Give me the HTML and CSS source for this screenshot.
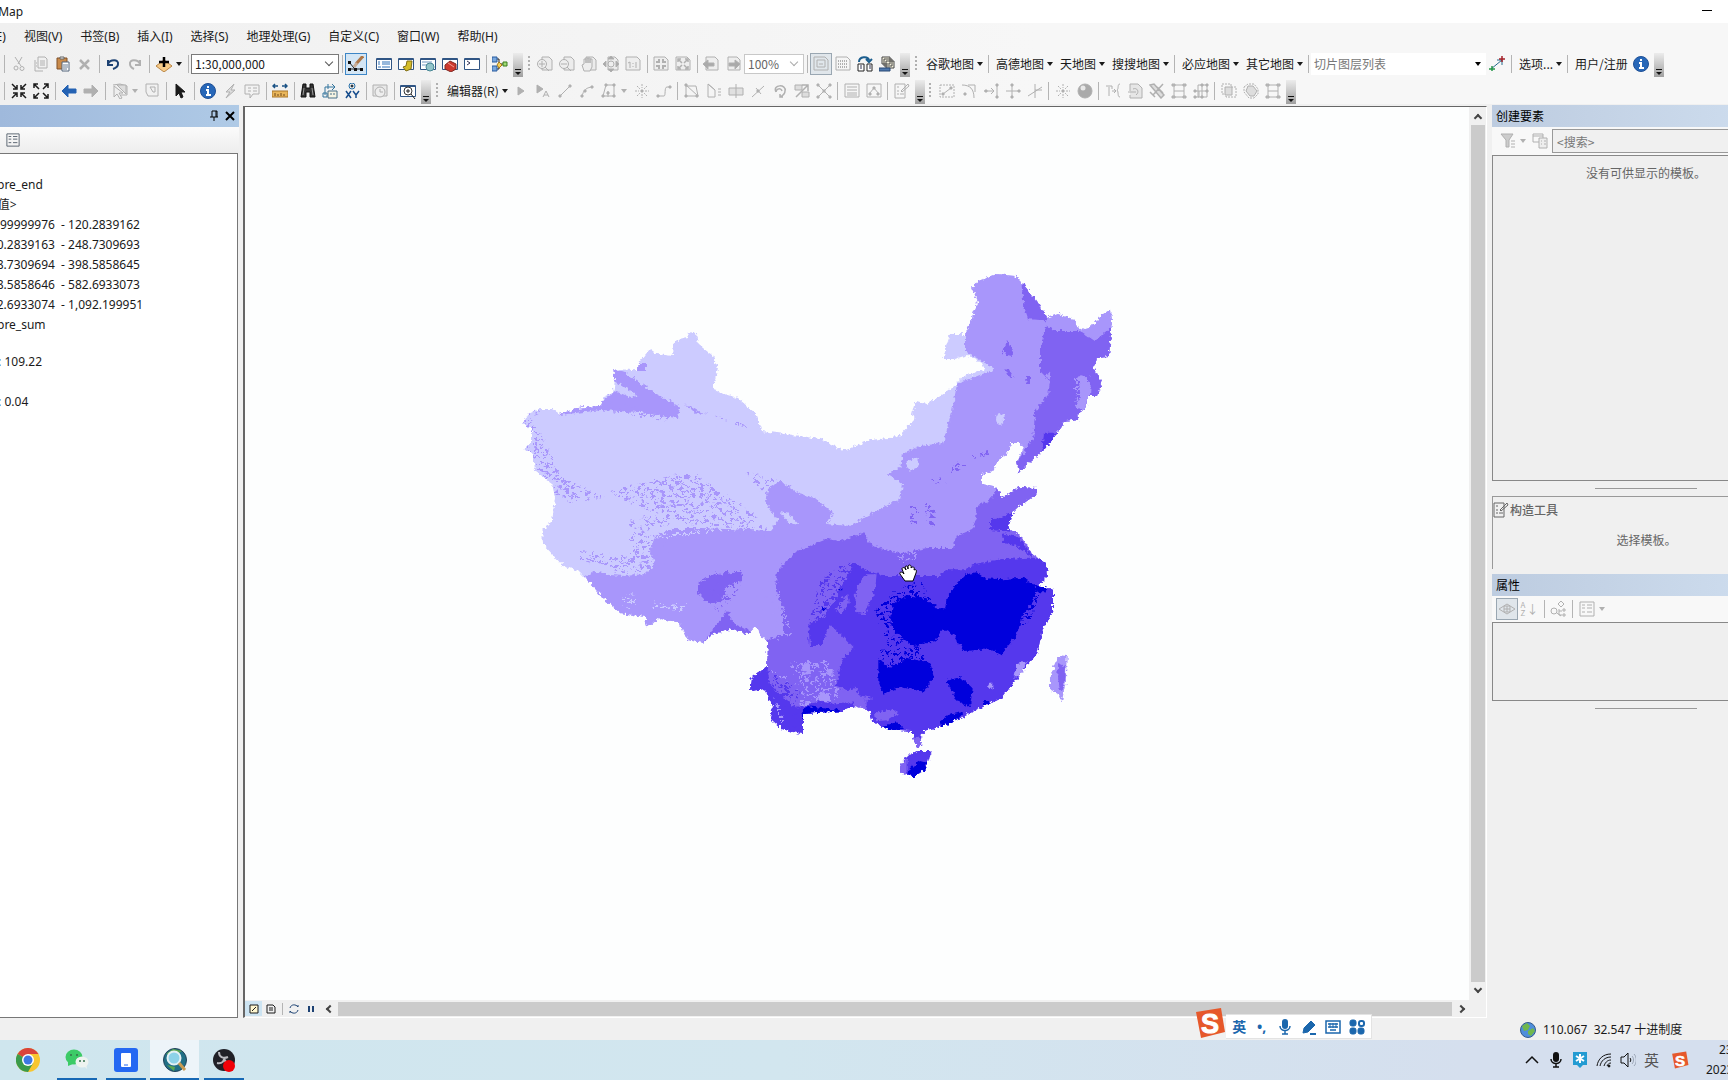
FILE: index.html
```html
<!DOCTYPE html>
<html lang="zh-CN">
<head>
<meta charset="utf-8">
<title>ArcMap</title>
<link rel="stylesheet" href="styles.css">
</head>
<body>
<svg class="defs" aria-hidden="true">
  <symbol id="cut" viewBox="0 0 16 16"><path d="M4 1l6 9M11 1L7 8"/><circle cx="5" cy="12" r="2"/><circle cx="11" cy="12.500" r="2"/></symbol>
  <symbol id="copy" viewBox="0 0 16 16"><path d="M5 1h7l2 2v9H5zM2 4v11h8M7 5h5M7 7h5M7 9h5M3 7h1M3 10h1"/></symbol>
  <symbol id="paste" viewBox="0 0 16 16"><path d="M2 2h10v11H2z" fill="#c98a4a" stroke="#805028"/><path d="M5 1h4v2H5z" fill="#eee" stroke="#666"/><path d="M7 6h7v9H7z" fill="#fff" stroke="#53657a"/><path d="M8 9h5M8 11h5M8 13h4" stroke="#6b7c92"/></symbol>
  <symbol id="del" viewBox="0 0 16 16"><path d="M3 4l9 9M12 4l-9 9" stroke-width="2.500"/></symbol>
  <symbol id="undo" viewBox="0 0 16 16"><path d="M3 4v5h5M3 8c2-5 11-5 10 0 0 3-2 4-5 5" stroke-width="2"/></symbol>
  <symbol id="redo" viewBox="0 0 16 16"><path d="M13 4v5H8M13 8C11 3 2 3 3 8c0 3 2 4 4 5" stroke-width="2"/></symbol>
  <symbol id="add" viewBox="0 0 16 16"><path d="M0 10l8-6 8 6-8 6z" fill="#f6cb88" stroke="#b98545"/><path d="M8 1v10M3 6h10" stroke="#000" stroke-width="2.500"/></symbol>
  <symbol id="edit" viewBox="0 0 16 16"><path d="M2 13h12M1 6l5 6" stroke="#222"/><path d="M0 12h3v3H0zM6 12h3v3H6zM12 12h3v3h-3zM0 5h3v3H0z" fill="#111" stroke="none"/><path d="M15 0L8 8" stroke="#ae7646" stroke-width="3"/><path d="M9 7l-3 4" stroke="#c9ae98" stroke-width="3"/></symbol>
  <symbol id="win" viewBox="0 0 16 16"><path d="M.5 2.500h15v11H.5z" fill="#fff" stroke="#305584"/><path d="M1 3h14" stroke="#305584" stroke-width="2"/></symbol>
  <symbol id="wtable" viewBox="0 0 16 16"><use href="#win"/><path d="M2 6h2M2 8h2M2 11h3M6 6h8M6 8h8M6 11h8" stroke="#3273b7"/></symbol>
  <symbol id="wcat" viewBox="0 0 16 16"><use href="#win"/><path d="M9 5h5l-1 8-5 2-3-4 3-1z" fill="#d4bd29" stroke="#806e16"/></symbol>
  <symbol id="wsearch" viewBox="0 0 16 16"><use href="#win"/><path d="M2 6h10M2 9h5" stroke="#7399c2"/><circle cx="10" cy="11" r="4" fill="#93c4ca" stroke="#498795"/></symbol>
  <symbol id="wtool" viewBox="0 0 16 16"><use href="#win"/><path d="M3 9l5-4 6 3v5l-5 3-6-3z" fill="#ce3a2f" stroke="#802923"/><path d="M6 7l6 4" stroke="#f3a095"/></symbol>
  <symbol id="wpy" viewBox="0 0 16 16"><use href="#win"/><path d="M3 5l3 2-3 2" stroke="#335"/></symbol>
  <symbol id="model" viewBox="0 0 16 16"><path d="M3 3h4v10H3M7 8h5" stroke="#222"/><path d="M0 1h5v5H0zM0 10h5v5H0z" fill="#79a8df" stroke="#295b9d"/><path d="M7 6l3 3-3 3-2-3z" fill="#f7d15b" stroke="#a77c17"/><path d="M11 6h4v4h-4z" fill="#a0dc75" stroke="#3c7c20"/></symbol>
  <symbol id="page" viewBox="0 0 16 16"><path d="M5 1h7l3 3v10H5z" fill="#ececec"/></symbol>
  <symbol id="pin1" viewBox="0 0 16 16"><use href="#page"/><circle cx="5" cy="8" r="4.500" fill="#eee"/><path d="M5 5v6M2 8h6M8 11l4 4"/></symbol>
  <symbol id="pout" viewBox="0 0 16 16"><use href="#page"/><circle cx="5" cy="8" r="4.500" fill="#eee"/><path d="M2 8h6M8 11l4 4"/></symbol>
  <symbol id="phand" viewBox="0 0 16 16"><use href="#page"/><path d="M3 15L1 9l2-1V3h2v4-5h2v5-5h2v5-4h2v8l-2 4z" fill="#eee"/></symbol>
  <symbol id="pglobe" viewBox="0 0 16 16"><use href="#page"/><path d="M8 0l3 3H5zM8 16l3-3H5zM0 8l3-3v6zM16 8l-3-3v6z" fill="#aaa"/><circle cx="8" cy="8" r="3" fill="#eee"/></symbol>
  <symbol id="pone" viewBox="0 0 16 16"><path d="M1 1h11l3 3v10H1z" fill="#eee"/><path d="M3 7l2-1v6M11 6v6M8 7v1M8 10v1"/></symbol>
  <symbol id="pfour" viewBox="0 0 16 16"><path d="M1 1h11l3 3v10H1z" fill="#eee"/><path d="M6 3v3H3M10 3v3h3M6 13v-3H3M10 13v-3h3" stroke-width="2"/></symbol>
  <symbol id="pfull" viewBox="0 0 16 16"><path d="M1 1h11l3 3v10H1z" fill="#eee"/><path d="M3 6V3h3M10 3h3v3M3 10v3h3M13 10v3h-3M4 4l3 3M12 4L9 7M4 12l3-3M12 12L9 9" stroke-width="1.500"/></symbol>
  <symbol id="pback" viewBox="0 0 16 16"><path d="M3 1h9l3 3v10H3z" fill="#eee"/><path d="M0 8l5-4v3h6v3H5v3z" fill="#aaa"/></symbol>
  <symbol id="pfwd" viewBox="0 0 16 16"><path d="M3 1h9l3 3v10H3z" fill="#eee"/><path d="M15 8l-5-4v3H4v3h6v3z" fill="#aaa"/></symbol>
  <symbol id="draft" viewBox="0 0 16 16"><path d="M1 1h11l3 3v10H1z"/><path d="M4 4h8v7H4zM6 8h4"/></symbol>
  <symbol id="dots" viewBox="0 0 16 16"><path d="M1 1h11l3 3v10H1z"/><path d="M3 5h10M3 8h10M3 11h10" stroke-dasharray="1 1" stroke-width="2"/></symbol>
  <symbol id="swap" viewBox="0 0 16 16"><path d="M2 6C2 0 11 0 12 4M9 3l3 3 3-3" stroke="#1c5e8f" stroke-width="2"/><path d="M1 8h6v7H1zM10 8h5v7h-5z" fill="#fff" stroke="#222"/><path d="M3 10h2M3 12h2M12 10h2M12 12h2" stroke="#335"/></symbol>
  <symbol id="stack" viewBox="0 0 16 16"><path d="M3 1h8v7H3zM5 3h8v7H5zM7 5h8v7H7z" fill="#f6f3df" stroke="#444"/><path d="M0 12h11v3H0z" fill="#4e78ae" stroke="#284875"/></symbol>
  <symbol id="inward" viewBox="0 0 16 16"><path d="M1 1l4 4M15 1l-4 4M1 15l4-4M15 15l-4-4M2 6h4V2M10 2v4h4M2 10h4v4M10 14v-4h4" stroke-width="1.500"/></symbol>
  <symbol id="outward" viewBox="0 0 16 16"><path d="M1 1l5 5M15 1l-5 5M1 15l5-5M15 15l-5-5M1 5V1h4M11 1h4v4M1 11v4h4M11 15h4v-4" stroke-width="1.500"/></symbol>
  <symbol id="back" viewBox="0 0 16 16"><path d="M1 8l6-6v4h8v4H7v4z" fill="currentColor"/></symbol>
  <symbol id="fwd" viewBox="0 0 16 16"><path d="M15 8L9 2v4H1v4h8v4z" fill="currentColor"/></symbol>
  <symbol id="sel" viewBox="0 0 16 16"><path d="M1 2l7-1 7 2v9H9"/><path d="M5 2h9v9z" fill="#ddd"/><path d="M2 3v11l3-3 3 5 2-1-3-5h4z" fill="#eee"/></symbol>
  <symbol id="clearsel" viewBox="0 0 16 16"><path d="M2 1h12v12H4l-2-4zM6 4h5v5M6 4l3 5h2"/></symbol>
  <symbol id="arrow" viewBox="0 0 16 16"><path d="M4 1v12l3-3 2 5 2-1-2-5h4z" fill="currentColor"/></symbol>
  <symbol id="info" viewBox="0 0 16 16"><circle cx="8" cy="8" r="7.500" fill="#2767b8" stroke="#1e4f96"/><path d="M8 3v2M6 7h2v5M6 12h5" stroke="#fff" stroke-width="2"/></symbol>
  <symbol id="bolt" viewBox="0 0 16 16"><path d="M12 1L4 9h4l-4 6 9-8H9z" fill="#ddd"/></symbol>
  <symbol id="popup" viewBox="0 0 16 16"><path d="M1 2h14v9H9l-3 4v-4H1zM4 5h3M4 8h3M9 5h4M9 8h4"/></symbol>
  <symbol id="measure" viewBox="0 0 16 16"><path d="M1 3h5M10 3h5M3 1L1 3l2 2M13 1l2 2-2 2" stroke="#1a5285" stroke-width="1.500"/><path d="M0 8h16v6H0z" fill="#e9b65b" stroke="#a87529"/><path d="M3 10v3M6 11v2M9 10v3M12 11v2" stroke="#71491b"/></symbol>
  <symbol id="find" viewBox="0 0 16 16"><path d="M3 1h3v4h4V1h3l2 13h-5V9H6v5H1z" fill="#333" stroke="#111"/><path d="M4 5L3 12M12 5l1 7" stroke="#999"/></symbol>
  <symbol id="route" viewBox="0 0 16 16"><path d="M3 12V4h9M10 1l3 3-3 3M6 6V1M1 10h4v4H1z" stroke="#32749d"/><path d="M6 8h9v7H6zM8 11h2M11 11h2" fill="#f6f3e2" stroke="#476f88"/></symbol>
  <symbol id="xy" viewBox="0 0 16 16"><circle cx="8" cy="3" r="3" stroke="#2770a8"/><circle cx="8" cy="3" r="1" fill="#2770a8"/><path d="M2 8l5 7M7 8l-5 7M9 8l3 4 3-4M12 12v3" stroke="#174d8d" stroke-width="1.500"/></symbol>
  <symbol id="clock" viewBox="0 0 16 16"><path d="M1 2h14v11H1z" fill="#e8e8e8"/><circle cx="8" cy="9" r="5" fill="#eee"/><path d="M8 6v3h3"/></symbol>
  <symbol id="magwin" viewBox="0 0 16 16"><use href="#win"/><circle cx="8" cy="8" r="4" fill="#fff" stroke="#333"/><path d="M8 6v4M6 8h4M11 11l4 5" stroke="#222"/></symbol>
  <symbol id="play" viewBox="0 0 16 16"><path d="M5 4v8l6-4z" fill="currentColor"/></symbol>
  <symbol id="playa" viewBox="0 0 16 16"><path d="M2 2v8l6-4z" fill="currentColor"/><path d="M8 14l3-6 3 6M9 12h4"/></symbol>
  <symbol id="line" viewBox="0 0 16 16"><path d="M3 13L13 3"/><path d="M2 12h2v2H2zM12 2h2v2h-2z" fill="currentColor"/></symbol>
  <symbol id="arc" viewBox="0 0 16 16"><path d="M3 14C4 7 8 4 14 4"/><path d="M2 12h2v2H2zM5 7h2v2H5zM12 3h2v2h-2z" fill="currentColor"/></symbol>
  <symbol id="poly" viewBox="0 0 16 16"><path d="M5 2h8v11H2zM7 8v6"/><path d="M4 1h2v2H4zM12 1h2v2h-2zM12 12h2v2h-2zM1 12h2v2H1zM6 9h2v2H6z" fill="currentColor"/></symbol>
  <symbol id="burst" viewBox="0 0 16 16"><path d="M8 1v4M8 11v4M1 8h4M11 8h4M3 3l3 3M13 3l-3 3M3 13l3-3M13 13l-3-3" stroke-dasharray="2 1"/><path d="M7 7h2v2H7z" fill="currentColor"/></symbol>
  <symbol id="step" viewBox="0 0 16 16"><path d="M2 13h6c2 0 0-9 3-9h3"/><path d="M1 12h2v2H1zM13 3h2v2h-2z" fill="currentColor"/></symbol>
  <symbol id="tri" viewBox="0 0 16 16"><path d="M2 2v11h12zM2 3h10l2 10"/><path d="M1 1h2v2H1zM12 12h2v2h-2zM1 12h2v2H1z" fill="currentColor"/></symbol>
  <symbol id="tri2" viewBox="0 0 16 16"><path d="M2 1v13h7V7zM2 1l7 6M12 6h3M12 9h3M12 12h3"/></symbol>
  <symbol id="cutp" viewBox="0 0 16 16"><path d="M1 5h14v7H1zM8 1v14" fill="#e0e0e0"/></symbol>
  <symbol id="split" viewBox="0 0 16 16"><path d="M2 14L14 3M6 5l5 6"/><path d="M7 7h2v2H7z" fill="currentColor"/></symbol>
  <symbol id="rot" viewBox="0 0 16 16"><path d="M4 9c-4-8 11-8 9-1 0 3-3 5-5 6M4 9c0-3 5-5 6-1M8 11v3h3" stroke-width="1.500"/></symbol>
  <symbol id="attr" viewBox="0 0 16 16"><path d="M1 2h7v5H1zM8 9h7v5H8z" fill="#ddd"/><path d="M2 14L14 2M8 2h6v6" stroke-width="1.500"/></symbol>
  <symbol id="nodes" viewBox="0 0 16 16"><path d="M2 2l12 12M14 2L2 14"/><path d="M1 1h2v2H1zM13 1h2v2h-2zM1 13h2v2H1zM13 13h2v2h-2zM7 7h2v2H7z" fill="currentColor"/></symbol>
  <symbol id="list" viewBox="0 0 16 16"><path d="M1 1h14v13H1zM3 4h10M3 7h10M3 10h10M3 12h10"/></symbol>
  <symbol id="shape" viewBox="0 0 16 16"><path d="M1 1h14v13H1zM3 11l5-6 5 6"/><path d="M3 10h2v2H3zM7 4h2v2H7zM11 10h2v2h-2z" fill="currentColor"/></symbol>
  <symbol id="form" viewBox="0 0 16 16"><path d="M1 1h10v14H1zM3 4h2M3 8h2M3 11h2M7 8l7-7 1 2-7 6zM6 11h4"/></symbol>
  <symbol id="boxline" viewBox="0 0 16 16"><path d="M1 2h14v12H1z" stroke-dasharray="2 1"/><path d="M4 11l8-6"/><path d="M3 10h2v2H3zM11 4h2v2h-2z" fill="currentColor"/></symbol>
  <symbol id="fillet" viewBox="0 0 16 16"><path d="M1 2c8 0 12 4 12 13M7 2h7v7"/><path d="M3 10h2v2H3z" fill="currentColor"/></symbol>
  <symbol id="extend" viewBox="0 0 16 16"><path d="M1 8h10M8 5l3 3-3 3M14 1v14"/><path d="M2 7h2v2H2zM13 1h2v2h-2zM13 13h2v2h-2z" fill="currentColor"/></symbol>
  <symbol id="trim" viewBox="0 0 16 16"><path d="M7 1v14M1 8h14"/><path d="M6 1h2v2H6zM6 13h2v2H6zM13 7h2v2h-2z" fill="currentColor"/></symbol>
  <symbol id="cross" viewBox="0 0 16 16"><path d="M1 13L15 4M8 1v14M8 7h7"/></symbol>
  <symbol id="ball" viewBox="0 0 16 16"><circle cx="8" cy="8" r="7" fill="#aaa"/><circle cx="6" cy="5" r="2.500" fill="#e8e8e8" stroke="none"/></symbol>
  <symbol id="snap" viewBox="0 0 16 16"><path d="M1 3h6v3M4 4v9M7 8h4M9 6l2 2-2 2M15 1c-3 0-1 5-3 6 2 2 0 7 3 7"/></symbol>
  <symbol id="turnp" viewBox="0 0 16 16"><path d="M3 8V1h8l4 4v10H3v-3M1 9h8M6 6c4-2 7 3 3 6" fill="#e6e6e6"/></symbol>
  <symbol id="hatch" viewBox="0 0 16 16"><path d="M1 2l4-1 10 11-3 3zM4 12L14 1M1 9l5 5M8 4l6 6" fill="#ddd" stroke-width="1.500"/></symbol>
  <symbol id="rect" viewBox="0 0 16 16"><path d="M3 2h10v12H3zM3 8h10"/><path d="M1 1h3v2H1zM12 1h3v2h-3zM1 13h3v2H1zM12 13h3v2h-3z" fill="#bbb"/></symbol>
  <symbol id="grid4" viewBox="0 0 16 16"><path d="M5 2h9v12H5zM1 8h13M9 2v12M1 14h5V8"/><path d="M8 1h2v2H8zM13 1h2v2h-2zM13 7h2v2h-2zM1 7h2v2H1zM1 13h2v2H1zM8 13h2v2H8z" fill="currentColor"/></symbol>
  <symbol id="merge" viewBox="0 0 16 16"><path d="M1 1h9v3h5v10H5v-3H1z" stroke-dasharray="2 1"/><path d="M4 4h7v8H4z" fill="#ddd"/></symbol>
  <symbol id="octa" viewBox="0 0 16 16"><path d="M1 4l4-3h6l4 5v5l-4 4H6l-5-6z" stroke-dasharray="2 1"/><path d="M5 3h5l4 5-3 5H7L3 8z" fill="#ddd"/></symbol>
  <symbol id="xline" viewBox="0 0 16 16"><path d="M2 13L13 4M8 4h5v5" stroke="#256b8c"/><path d="M3 10v5M0 13h6" stroke="#26964a" stroke-width="1.500"/><path d="M13 0v6M10 3h6" stroke="#a52028" stroke-width="1.500"/></symbol>
  <symbol id="opts" viewBox="0 0 16 16"><path d="M1 1h14v14H1z"/><path d="M3 4h3M3 7h3M3 11h3M8 4h5M8 7h5M8 11h5"/></symbol>
  <symbol id="funnel" viewBox="0 0 16 16"><path d="M1 1h12L9 7v7H6V7z" fill="#ccc"/><path d="M11 8h4M11 11h4M11 14h4"/></symbol>
  <symbol id="tpl" viewBox="0 0 16 16"><path d="M1 1h10v8H1zM1 3h10"/><path d="M7 5h8v10H7zM9 8h1M9 11h1M12 8h2M12 11h2" fill="#eee"/></symbol>
  <symbol id="globeicon" viewBox="0 0 16 16"><circle cx="8" cy="8" r="7.500" fill="#4f8edb" stroke="#345b8c"/><path d="M2 4l5-3 3 3-2 4-4 1zM8 9l5-3 2 3-4 5-3-2z" fill="#71b84c" stroke="none"/></symbol>
  <symbol id="mic" viewBox="0 0 16 16"><rect x="5" y="0" width="6" height="10" rx="3" fill="currentColor" stroke="none"/><path d="M3 7c0 6 10 6 10 0M8 12v3M5 15h6" stroke-width="1.500"/></symbol>
</svg>

<header class="title"><span class="app-name">ArcMap</span><button class="minimize" aria-label="最小化"></button></header>
<nav class="menu">
  <button>编辑(E)</button><button>视图(V)</button><button>书签(B)</button><button>插入(I)</button><button>选择(S)</button><button>地理处理(G)</button><button>自定义(C)</button><button>窗口(W)</button><button>帮助(H)</button>
</nav>

<div class="bar">
  <i class="sep first"></i>
  <button class="tb off"><svg><use href="#cut"/></svg></button><button class="tb off"><svg><use href="#copy"/></svg></button><button class="tb"><svg><use href="#paste"/></svg></button><button class="tb off"><svg><use href="#del"/></svg></button>
  <i class="sep"></i>
  <button class="tb navy"><svg><use href="#undo"/></svg></button><button class="tb off"><svg><use href="#redo"/></svg></button>
  <i class="sep"></i>
  <button class="tb drop"><svg><use href="#add"/></svg><i class="caret"></i></button>
  <i class="sep"></i>
  <div class="combo scale"><input aria-label="比例" value="1:30,000,000"><i class="chev"></i></div>
  <i class="sep"></i>
  <button class="tb on"><svg><use href="#edit"/></svg></button>
  <i class="gap"></i>
  <button class="tb"><svg><use href="#wtable"/></svg></button><button class="tb"><svg><use href="#wcat"/></svg></button><button class="tb"><svg><use href="#wsearch"/></svg></button><button class="tb"><svg><use href="#wtool"/></svg></button><button class="tb"><svg><use href="#wpy"/></svg></button>
  <i class="sep"></i>
  <button class="tb"><svg><use href="#model"/></svg></button>
  <button class="more" aria-label="更多"></button><i class="grip"></i>
  <button class="tb off"><svg><use href="#pin1"/></svg></button><button class="tb off"><svg><use href="#pout"/></svg></button><button class="tb off"><svg><use href="#phand"/></svg></button><button class="tb off"><svg><use href="#pglobe"/></svg></button><button class="tb off"><svg><use href="#pone"/></svg></button>
  <i class="sep"></i>
  <button class="tb off"><svg><use href="#pfour"/></svg></button><button class="tb off"><svg><use href="#pfull"/></svg></button>
  <i class="sep"></i>
  <button class="tb off"><svg><use href="#pback"/></svg></button><button class="tb off"><svg><use href="#pfwd"/></svg></button>
  <div class="combo percent"><input aria-label="缩放" value="100%"><i class="chev pale"></i></div>
  <i class="sep"></i>
  <button class="tb off on grayed"><svg><use href="#draft"/></svg></button><button class="tb off"><svg><use href="#dots"/></svg></button><button class="tb"><svg><use href="#swap"/></svg></button><button class="tb"><svg><use href="#stack"/></svg></button>
  <button class="more" aria-label="更多"></button><i class="grip"></i>
  <button class="txt">谷歌地图<i class="caret"></i></button>
  <i class="sep"></i>
  <button class="txt">高德地图<i class="caret"></i></button><button class="txt">天地图<i class="caret"></i></button><button class="txt">搜搜地图<i class="caret"></i></button>
  <i class="sep"></i>
  <button class="txt">必应地图<i class="caret"></i></button><button class="txt">其它地图<i class="caret"></i></button>
  <i class="sep"></i>
  <div class="combo tiles"><input aria-label="切片图层" value="切片图层列表"><i class="caret"></i></div>
  <button class="tb"><svg><use href="#xline"/></svg></button>
  <i class="sep"></i>
  <button class="txt">选项...<i class="caret"></i></button>
  <i class="sep"></i>
  <button class="txt">用户/注册</button><button class="tb"><svg><use href="#info"/></svg></button>
  <button class="more" aria-label="更多"></button>
</div>

<div class="bar">
  <i class="sep first"></i>
  <button class="tb"><svg><use href="#inward"/></svg></button><button class="tb"><svg><use href="#outward"/></svg></button>
  <i class="sep"></i>
  <button class="tb blue"><svg><use href="#back"/></svg></button><button class="tb off"><svg><use href="#fwd"/></svg></button>
  <i class="sep"></i>
  <button class="tb off drop"><svg><use href="#sel"/></svg><i class="caret"></i></button><button class="tb off"><svg><use href="#clearsel"/></svg></button>
  <i class="sep"></i>
  <button class="tb"><svg><use href="#arrow"/></svg></button>
  <i class="sep"></i>
  <button class="tb"><svg><use href="#info"/></svg></button><button class="tb off"><svg><use href="#bolt"/></svg></button><button class="tb off"><svg><use href="#popup"/></svg></button>
  <i class="sep"></i>
  <button class="tb"><svg><use href="#measure"/></svg></button>
  <i class="sep"></i>
  <button class="tb"><svg><use href="#find"/></svg></button><button class="tb"><svg><use href="#route"/></svg></button><button class="tb"><svg><use href="#xy"/></svg></button>
  <i class="sep"></i>
  <button class="tb off"><svg><use href="#clock"/></svg></button>
  <i class="sep"></i>
  <button class="tb"><svg><use href="#magwin"/></svg></button>
  <button class="more" aria-label="更多"></button><i class="grip"></i>
  <button class="txt">编辑器(R)<i class="caret"></i></button>
  <button class="tb off"><svg><use href="#play"/></svg></button><button class="tb off"><svg><use href="#playa"/></svg></button><button class="tb off"><svg><use href="#line"/></svg></button><button class="tb off"><svg><use href="#arc"/></svg></button><button class="tb off drop"><svg><use href="#poly"/></svg><i class="caret"></i></button><button class="tb off"><svg><use href="#burst"/></svg></button><button class="tb off"><svg><use href="#step"/></svg></button>
  <i class="sep"></i>
  <button class="tb off"><svg><use href="#tri"/></svg></button><button class="tb off"><svg><use href="#tri2"/></svg></button><button class="tb off"><svg><use href="#cutp"/></svg></button><button class="tb off"><svg><use href="#split"/></svg></button><button class="tb off"><svg><use href="#rot"/></svg></button><button class="tb off"><svg><use href="#attr"/></svg></button><button class="tb off"><svg><use href="#nodes"/></svg></button>
  <i class="sep"></i>
  <button class="tb off"><svg><use href="#list"/></svg></button><button class="tb off"><svg><use href="#shape"/></svg></button>
  <i class="sep"></i>
  <button class="tb off"><svg><use href="#form"/></svg></button>
  <button class="more" aria-label="更多"></button><i class="grip"></i>
  <button class="tb off"><svg><use href="#boxline"/></svg></button><button class="tb off"><svg><use href="#fillet"/></svg></button><button class="tb off"><svg><use href="#extend"/></svg></button><button class="tb off"><svg><use href="#trim"/></svg></button><button class="tb off"><svg><use href="#cross"/></svg></button>
  <i class="sep"></i>
  <button class="tb off"><svg><use href="#burst"/></svg></button><button class="tb off"><svg><use href="#ball"/></svg></button>
  <i class="sep"></i>
  <button class="tb off"><svg><use href="#snap"/></svg></button><button class="tb off"><svg><use href="#turnp"/></svg></button><button class="tb off"><svg><use href="#hatch"/></svg></button><button class="tb off"><svg><use href="#rect"/></svg></button><button class="tb off"><svg><use href="#grid4"/></svg></button>
  <i class="sep"></i>
  <button class="tb off"><svg><use href="#merge"/></svg></button><button class="tb off"><svg><use href="#octa"/></svg></button><button class="tb off"><svg><use href="#rect"/></svg></button>
  <button class="more" aria-label="更多"></button>
</div>

<main class="work">
  <aside class="toc">
    <div class="panel-head strong">
      <svg class="head-ic" viewBox="0 0 12 12"><path d="M4 1h5v6M4 1v6M2 7h8M6 7v4M8 1v6"/></svg>
      <svg class="head-ic" viewBox="0 0 12 12"><path d="M2 2l8 8M10 2l-8 8" stroke-width="2"/></svg>
    </div>
    <div class="toc-tools"><button class="tb slate"><svg><use href="#opts"/></svg></button></div>
    <ul class="tree">
      <li class="layer">pre_end</li>
      <li class="field">&lt;值&gt;</li>
      <li>0.099999976&nbsp; - 120.2839162</li>
      <li>120.2839163&nbsp; - 248.7309693</li>
      <li>248.7309694&nbsp; - 398.5858645</li>
      <li>398.5858646&nbsp; - 582.6933073</li>
      <li>582.6933074&nbsp; - 1,092.199951</li>
      <li class="layer">pre_sum</li>
      <li class="stretch">高 : 109.22</li>
      <li class="stretch">低 : 0.04</li>
    </ul>
  </aside>

  <section class="view">
    <div class="canvas">
      <svg class="map" viewBox="507 253 700 600">
        <defs>
          <clipPath id="land"><path d="M523 423L528 413 540 408 552 408 560 413 577 407 600 405 605 395 613 392 615 380 613 368 633 369 637 370 640 360 650 348 657 353 673 355 674 340 687 337 689 331 696 332 698 343 713 355 718 368 713 385 717 391 738 397 755 412 762 430 800 435 820 438 840 448 847 449 870 439 898 436 915 418 912 412 915 401 928 403 942 394 955 385 963 375 985 369 982 362 967 354 955 358 943 358 947 342 950 333 965 333 972 318 974 308 978 300 972 288 978 280 997 273 1015 275 1023 283 1037 300 1047 317 1058 313 1073 318 1080 329 1093 325 1100 315 1111 308 1112 320 1109 356 1098 357 1093 365 1102 383 1097 395 1088 395 1085 408 1078 412 1079 418 1065 420 1053 438 1043 450 1025 465 1019 472 1017 460 1024 447 1020 442 1012 442 1007 453 997 460 995 469 982 473 982 483 997 487 1003 497 1012 490 1020 486 1037 487 1037 493 1020 505 1012 513 1008 527 1023 537 1032 553 1045 562 1047 568 1048 575 1037 585 1053 588 1053 610 1043 627 1037 653 1020 673 1002 697 970 712 943 725 923 730 921 744 917 747 913 735 913 730 887 728 872 720 870 710 855 705 843 710 803 713 803 733 797 732 782 728 770 717 773 707 765 688 750 690 752 677 767 665 768 643 760 633 755 625 748 633 733 628 713 633 703 642 687 639 680 623 660 617 647 627 645 616 620 612 603 597 590 582 578 570 563 565 543 543 542 530 552 520 555 497 552 482 535 470 533 453 523 448 532 442 532 428z"/></clipPath>
          <filter id="rough" filterUnits="userSpaceOnUse" x="506" y="253" width="700" height="600" color-interpolation-filters="sRGB"><feTurbulence type="fractalNoise" baseFrequency="0.300" numOctaves="2" seed="4"/><feDisplacementMap in="SourceGraphic" scale="6" xChannelSelector="R" yChannelSelector="G"/></filter>
          <filter id="speck" filterUnits="userSpaceOnUse" x="506" y="253" width="700" height="600" color-interpolation-filters="sRGB"><feTurbulence type="fractalNoise" baseFrequency="0.200 0.400" numOctaves="3" seed="8"/><feColorMatrix values="0 0 0 0 0 0 0 0 0 0 0 0 0 0 0 30 0 0 0 -17"/><feComposite in="SourceGraphic" operator="in"/></filter>
        </defs>
        <g filter="url(#rough)">
          <g clip-path="url(#land)">
            <path class="l1" d="M506 253h700v600H506z"/>
            <path class="l2" d="M613 368L625 372 640 382 655 392 680 406 678 417 660 415 640 411 600 409 560 414 555 404 600 402 615 390 630 396 638 395 615 380zM683 402L700 411 707 412 697 413zM636 362h10v8h-8z"/>
            <path class="l2" d="M575 583L595 570 610 574 625 575 645 573 655 563 650 550 655 535 672 527 700 527 770 530 778 520 765 500 768 488 780 480 800 493 815 497 833 512 827 523 850 525 867 515 890 503 900 498 903 483 887 473 900 467 903 452 920 445 943 442 952 410 957 383 995 368 965 350 965 250 1200 250 1200 820 500 820 560 600z"/>
            <path class="l1" d="M780 511l10 2 9 11-10-2zM907 460l12-4-2 11-7 3-4-4z"/><ellipse class="l1" cx="1000" cy="418" rx="4" ry="6"/>
            <path class="l3" d="M765 640L783 633 783 610 775 587 777 570 797 550 827 538 840 540 863 532 873 545 900 552 927 547 953 547 957 535 973 528 977 513 975 507 992 497 1000 480 1060 470 1120 600 1000 800 740 800 740 650z"/>
            <path class="l3" d="M698 583L710 575 740 571 742 580 725 585 722 600 708 602 698 592zM727 610L735 623 755 633 752 640 705 640 718 622z"/>
            <g transform="translate(820 250) scale(.3333)">
              <path class="l3" d="M605 100L700 150 680 208 625 205 610 160zM678 225L705 240 780 240 825 270 870 230 900 240 890 330 870 440 780 520 640 700 570 660 615 600 640 560 645 480 685 430 690 390 660 360 660 290zM560 268L580 305 575 315 548 308zM553 355l15 2 14 22-18-3zM618 375h12v24h-10z"/>
              <path class="l2" d="M775 372L795 375 812 400 810 440 795 475 765 470 782 440zM675 370l15-5 5 22-12-5z"/>
              <path class="l4" d="M672 545h45l-30 58-20-3zM510 805l30-3 40-20-10 60-60-5z"/>
            </g>
            <g transform="translate(740 500) scale(.3333)">
              <path class="l4" d="M210 435L205 370 250 350 290 290 300 260 345 185 380 210 440 225 600 225 620 205 680 205 700 190 780 175 870 170 990 180 990 360 880 520 790 620 550 750 500 720 380 700 380 600 345 575 290 555 305 480 340 440 300 400 270 370 245 435zM20 530L80 490 90 550 125 585 170 620 240 600 340 605 345 640 190 720 80 700 20 600zM785 95L840 110 880 170 830 135 790 125zM750 55h60v28h-60z"/>
              <path class="l3" d="M375 220L410 220 405 265 375 340 345 335 348 265zM325 280l5 25-25 32-18-10 20-40zM405 635l60-12 8 15-30 20-35 3zM520 710h30v30h-30zM345 580l55 12-20 5-40-7zM350 560l10 40-85 8-20-20z"/>
              <path class="l5" d="M620 290L650 250 680 220 710 214 735 232 790 235 850 230 890 257 880 300 850 340 830 400 785 462 750 445 670 450 640 400 605 382 590 420 520 435 465 395 450 350 460 310 500 285 560 295 590 325 615 325zM415 475L450 500 500 470 570 485 582 530 550 572 480 558 430 578 415 540zM620 540L660 528 698 565 690 618 650 600zM180 640l20-25 100 13-10 20-105 0zM600 660l25-18 48-10-30 35-40 12zM420 680l50-18 20 20-40 10zM885 258h40l-10 16h-25zM730 600h20v12h-20zM295 260h12v8h-12zM245 318h14v10h-14z"/>
              <path class="l2" d="M180 490l25-5 10 25-15 10zM245 570l25 10 0 22-40-5zM258 505h20v20h-15zM830 490l30-10-15 40-25 10zM745 545h12v18h-12z"/>
            </g>
          </g>
          <g transform="translate(740 500) scale(.3333)">
            <path class="l4" d="M480 790L500 765 530 750 575 750 560 800 520 830 485 815z"/><path class="l3" d="M480 790L500 770 500 820 485 815z"/><path class="l5" d="M510 800L540 780 560 785 555 805 520 830 505 820z"/>
            <path class="l2" d="M930 530L945 490 960 462 980 465 978 540 965 605 955 580 930 565z"/><path class="l3" d="M955 485l20 15-4 60-10 10-10-40z"/>
          </g>
          <g clip-path="url(#land)">
            <g filter="url(#speck)">
              <path class="l2" d="M555 405l-35 15 15 60 35 22 35-5-45-22-12-28-20-35zM610 490l80-20 60 40 25 25-70-5-80-30zM630 520l40-10 0 50-40 15-50-15 0-10 50 5zM700 410l60 18-10 0zM745 470l35 10-10 20zM570 405l50-4 60 20-60-8z"/>
              <path class="l1" d="M655 600l32 2-5 8-30-2zM622 592l14 2-2 14-10-2zM640 530l40-8 60 6-80 10z"/>
              <path class="l3" d="M715 570l28 0-5 20-20 20-20-20zM910 505l8 0 0 18-8 0zM925 503l8 0 4 20-10 5zM947 468l12-8 8 4-14 8zM972 454l16-4 0 4-16 3zM932 478l10-4 4 8-8 2z"/>
              <path class="l2" d="M775 575l18 60-20 5-20-40zM790 660l40 0 10 40-40 5zM890 545l30 0-5 15-15 0zM770 670l18 0 0 50-10 0zM1075 375l15 0-5 35-10-5z"/>
              <path class="l4" d="M820 580l20-15 20-5-25 60-25 0zM770 670l30 20-5 40-20-30z"/>
              <path class="l5" d="M875 610l20-20 25-10 20 30-50 40zM880 650l40-5 10 25-40 5zM1020 590l20 0-10 30-15 10z"/>
            </g>
          </g>
        </g>
        <path class="hand" d="M905 580l-5-7c-1-2 2-3 4 0l-2-5c0-2 3-2 4 1l-1-3c1-2 3-1 3 2v-3c1-2 4-1 3 2 2-2 4-1 3 2 2-1 3 0 2 3l-3 8z"/>
      </svg>
    </div>
    <div class="vscroll"><i class="up"></i><b class="thumb"></b><i class="down"></i></div>
    <div class="hscroll">
      <button class="mini picked"><svg viewBox="0 0 10 10"><path d="M1 1h8v8H1z" fill="#fff7d0"/><path d="M3 7l4-4"/></svg></button>
      <button class="mini"><svg viewBox="0 0 10 10"><path d="M1 1h6l2 2v6H1zM3 4h4M3 6h4"/></svg></button>
      <i class="sep"></i>
      <button class="mini navy"><svg viewBox="0 0 10 10"><path d="M1 4c1-4 6-4 8-1V1M9 6c-1 4-6 4-8 1v2"/></svg></button>
      <button class="mini navy"><svg viewBox="0 0 10 10"><path d="M3 2v6M7 2v6" stroke-width="2"/></svg></button>
      <i class="left"></i><b class="thumb"></b><i class="right"></i>
    </div>
  </section>

  <aside class="side">
    <div class="side-in">
      <div class="panel-head">创建要素</div>
      <div class="side-tools"><button class="tb off drop"><svg><use href="#funnel"/></svg><i class="caret"></i></button><button class="tb off"><svg><use href="#tpl"/></svg></button><input class="search" aria-label="搜索" placeholder="&lt;搜索&gt;"></div>
      <div class="box templates">没有可供显示的模板。</div>
      <div class="splitter"></div>
      <div class="construct">
        <h2><svg><use href="#form"/></svg>构造工具</h2>
        <p>选择模板。</p>
      </div>
      <div class="panel-head">属性</div>
      <div class="prop-tools"><button class="tb off on grayed"><svg viewBox="0 0 16 16"><path d="M0 8l8-5 8 5-8 5zM5 5h6v6H5zM5 8h6M8 5v6"/></svg></button><button class="tb off az"><span>A<br>Z</span>↓</button><i class="sep"></i><button class="tb off"><svg viewBox="0 0 16 16"><circle cx="4" cy="10" r="3"/><path d="M7 12l4 3M9 8v6h3M9 10h3M11 0l3 3-3 3-3-3zM13 8h2v2h-2zM13 13h2v2h-2z"/></svg></button><i class="sep"></i><button class="tb off drop"><svg><use href="#opts"/></svg><i class="caret"></i></button></div>
      <div class="box props"></div>
      <div class="splitter"></div>
    </div>
  </aside>
</main>

<footer class="status">
  <div class="ime">
    <svg class="ime-logo" viewBox="0 0 32 32"><path d="M2 5l25-4 4 24-24 6z" fill="#e6582b" stroke="none"/><text class="sogou-s" x="7" y="26">S</text></svg>
    <span class="ime-bar"><b>英</b><b>•,</b>
      <svg><use href="#mic"/></svg>
      <svg viewBox="0 0 16 16"><path d="M2 14l1-5 7-7 4 4-7 7z" fill="currentColor"/><path d="M9 15h6" stroke-width="2"/></svg>
      <svg viewBox="0 0 16 16"><path d="M1 2h14v12H1zM3 5h10M3 8h10M5 11h6" stroke-width="1.500"/><path d="M5 4v5M8 4v5M11 4v5"/></svg>
      <svg viewBox="0 0 16 16"><rect x="1" y="1" width="6" height="6" rx="2" fill="currentColor"/><rect x="10" y="2" width="5" height="5" rx="2" stroke-width="2"/><rect x="1" y="9" width="6" height="6" rx="2" fill="currentColor"/><rect x="9" y="9" width="6" height="6" rx="2" fill="currentColor"/></svg>
    </span>
  </div>
  <svg class="globe"><use href="#globeicon"/></svg><span class="coords">110.067&nbsp; 32.547 十进制度</span>
</footer>

<footer class="task">
  <button class="app" aria-label="Chrome"><svg viewBox="0 0 24 24"><circle cx="12" cy="12" r="12" fill="#f8c62f"/><path d="M12 12L1.600 6A12 12 0 0 1 22.400 6z" fill="#d9443a"/><path d="M1.600 6A12 12 0 0 0 12 24l5.200-9L12 12z" fill="#3a9b4c"/><path d="M12 6h10.400L17 15z" fill="#f8c62f"/><circle cx="12" cy="12" r="6" fill="#fff"/><circle cx="12" cy="12" r="4.500" fill="#3d78e3"/></svg></button>
  <button class="app run" aria-label="微信"><svg viewBox="0 0 24 24"><ellipse cx="9" cy="9" rx="8.500" ry="7.500" fill="#3ccb67"/><path d="M3 13l0 5 5-2z" fill="#3ccb67"/><ellipse cx="17" cy="14" rx="6.500" ry="5.500" fill="#eef3f0"/><path d="M19 18l3 3-1-5z" fill="#eef3f0"/><path d="M6 6v2M12 6v2M15 12v2M19 12v2" stroke="#36714b" stroke-width="1.500"/></svg></button>
  <button class="app run" aria-label="手机"><svg viewBox="0 0 24 24"><rect width="24" height="24" rx="3" fill="#2468f2"/><rect x="7" y="5" width="10" height="14" rx="1" fill="#fff"/><path d="M10 17h4" stroke="#2468f2"/></svg></button>
  <button class="app run active" aria-label="ArcMap"><svg viewBox="0 0 24 24"><circle cx="12" cy="12" r="11.500" fill="#216f86" stroke="#224258"/><path d="M3 6l7-5 9 2-7 4zM4 17l8 2-1 4z" fill="#5da64f"/><circle cx="11" cy="10" r="6.500" fill="#8dd2e8" stroke="#e5f0f3" stroke-width="2"/><path d="M16 15l6 7" stroke="#c99a50" stroke-width="3"/></svg></button>
  <button class="app run" aria-label="OBS"><svg viewBox="0 0 24 24"><circle cx="12" cy="12" r="11" fill="#202027"/><path d="M7 4c0 5 4 7 9 5M5 15c5 1 8-2 7-6M12 10c1 5 5 6 8 4" fill="none" stroke="#b9b9bf" stroke-width="2"/><circle cx="17" cy="18" r="6" fill="#f00008"/></svg></button>
  <div class="tray">
    <svg viewBox="0 0 16 16"><path d="M2 11l6-6 6 6" stroke-width="1.500"/></svg>
    <svg><use href="#mic"/></svg>
    <svg viewBox="0 0 16 16"><path d="M1 0h14v13h-4l-3 3-3-3H1z" fill="#239bd2" stroke="none"/><path d="M8 2v9M4 4l8 5M12 4L4 9" stroke="#fff" stroke-width="2"/></svg>
    <svg viewBox="0 0 16 16"><path d="M1 14C2 7 7 2 15 2M4 14c1-5 5-9 11-9M8 14c1-3 3-6 7-6M11 14c1-2 2-3 4-3"/><circle cx="13" cy="14" r="1" fill="currentColor"/></svg>
    <svg viewBox="0 0 16 16"><path d="M1 5h3l4-4v14l-4-4H1zM10 6c1 1 1 3 0 4"/><path d="M12 4c2 2 2 6 0 8M14 2c3 3 3 9 0 12" stroke="#9aa5b5"/></svg>
    <span class="lang">英</span>
    <svg class="s" viewBox="0 0 32 32"><path d="M2 5l25-4 4 24-24 6z" fill="#e6582b" stroke="none"/><text class="sogou-s" x="7" y="26">S</text></svg>
  </div>
  <div class="time"><span>23:16</span><span>2023/3/20</span></div>
</footer>
</body>
</html>
```
FILE: styles.css
```css
* { box-sizing: border-box; }
body {
  margin: 0;
  height: 100vh;
  display: flex;
  flex-direction: column;
  overflow: hidden;
  background: #f0f0f0;
  color: #1a1a1a;
  font: 12px/20px "Noto Sans", "Noto Sans CJK SC", sans-serif;
}
button, input { font: inherit; color: inherit; border: 0; margin: 0; padding: 0; background: none; border-radius: 0; }
i { font-style: normal; }
svg { width: 16px; height: 16px; fill: none; stroke: currentColor; flex: none; }
.defs { position: absolute; width: 0; height: 0; }

.title { flex: 0 0 23px; display: flex; justify-content: space-between; background: #fff; }
.app-name { margin-left: -20px; line-height: 23px; }
.minimize { width: 10px; height: 1px; background: #000; margin: 10px 16px 0 0; }

.menu { flex: 0 0 27px; display: flex; align-items: center; padding-right: 8px; }
.menu button { padding: 0 9px; white-space: nowrap; }
.menu button:first-child { margin-left: -41px; }
.menu, .bar { background: linear-gradient(90deg, #f0f0f0, #f7f7f7 60%); }

.bar { flex: 0 0 27px; display: flex; align-items: center; }
.tb { flex: none; width: 22px; height: 22px; display: flex; align-items: center; justify-content: center; }
.tb.drop { width: 33px; gap: 4px; }
.off { color: #b0b0b0; }
.navy { color: #1d4273; }
.blue { color: #2462b3; }
.slate { color: #4d5866; }
.on { border: 1px solid #3d86c6; background: #d4e6f5; }
.on.grayed { border-color: #9aa7b2; background: #e0e6eb; }
.sep { flex: none; width: 6px; height: 18px; background: linear-gradient(#b4b4b4, #b4b4b4) center / 1px 100% no-repeat; }
.sep.first { width: 8px; }
.gap { flex: none; width: 6px; }
.caret { flex: none; width: 0; height: 0; border: 3px solid transparent; border-top: 4px solid currentColor; border-bottom: 0; }
.more { flex: none; width: 10px; height: 24px; margin-left: 2px; align-self: flex-end; display: flex; align-items: flex-end; justify-content: center; background: linear-gradient(#111, #111) center 16px / 6px 1px no-repeat, linear-gradient(#ececec, #a0a0a0); }
.more::after { content: ""; border: 3px solid transparent; border-top: 3px solid #111; border-bottom: 0; margin-bottom: 2px; }
.grip { flex: none; width: 11px; height: 16px; background: repeating-linear-gradient(#b0b0b0 0 2px, transparent 2px 4px) center / 2px 100% no-repeat; }
.txt { flex: none; display: flex; align-items: center; gap: 3px; padding: 0 2px 0 5px; white-space: nowrap; font-family: "Noto Sans CJK SC", sans-serif; }
.combo { flex: none; display: flex; align-items: center; height: 20px; background: #fff; font-family: "Noto Sans CJK SC", sans-serif; }
.combo input { flex: 1; min-width: 0; padding-left: 3px; height: 18px; }
.scale { width: 148px; border: 1px solid #7a7a7a; }
.percent { width: 60px; border: 1px solid #c8c8c8; color: #666; }
.tiles { width: 175px; height: 22px; color: #777; padding-right: 5px; }
.tiles .caret { color: #000; }
.chev { width: 6px; height: 6px; border: solid #555; border-width: 0 1px 1px 0; transform: rotate(45deg); margin: 0 6px 4px 0; }
.chev.pale { border-color: #aaa; }

.work { flex: 1; min-height: 0; display: flex; padding-top: 1px; }
.toc { flex: 0 0 239px; display: flex; flex-direction: column; overflow: hidden; margin-bottom: 2px; }
.panel-head { flex: none; height: 22px; line-height: 22px; padding-left: 4px; background: linear-gradient(90deg, #bdcce0, #d0dff0); font-family: "Noto Sans CJK SC", sans-serif; color: #000; }
.panel-head.strong { display: flex; justify-content: flex-end; align-items: center; gap: 4px; padding-right: 3px; background: linear-gradient(90deg, #9fb9dc, #afcae6); }
.head-ic { width: 12px; height: 12px; }
.toc-tools { flex: none; height: 26px; display: flex; align-items: center; padding-left: 2px; background: linear-gradient(#fbfbfb, #ededed); }
.toc-tools svg { width: 14px; height: 14px; }
.tree { flex: 1; margin: 0 1px 0 0; padding: 21px 0 0; list-style: none; background: #fff; border: solid #777; border-width: 1px 1px 1px 0; overflow: hidden; white-space: nowrap; }
.tree li { margin-left: -17px; height: 20px; }
.tree .layer { padding-left: 14px; }
.tree .field { padding-left: 8px; }
.tree .stretch { height: 40px; line-height: 54px; }

.view { flex: 1; min-width: 0; margin: 1px 5px 2px 4px; display: grid; grid-template: 1fr 17px / 1fr 17px; border: 1px solid #fff; border-left: 2px solid #666; border-top: 1px solid #666; background: #f0f0f0; }
.canvas { background: #fdfefe; display: flex; align-items: center; justify-content: center; overflow: hidden; min-height: 0; }
.map { width: 700px; height: 600px; stroke: none; }
.l1 { fill: #cccbff; }
.l2 { fill: #a896fb; }
.l3 { fill: #8063f2; }
.l4 { fill: #5538ed; }
.l5 { fill: #0000dc; }
.hand { fill: #fff; stroke: #000; }
.vscroll { display: flex; flex-direction: column; align-items: center; padding-left: 1px; }
.hscroll { grid-column: 1 / 3; display: flex; align-items: center; padding-right: 22px; }
.hscroll .sep { height: 12px; }
.thumb { flex: 1; background: #cbcbcb; }
.vscroll .thumb { width: 14px; }
.hscroll .thumb { height: 14px; }
.up, .down, .left, .right { flex: none; width: 6px; height: 6px; border: solid #444; border-width: 2px 0 0 2px; transform: rotate(45deg); margin: 8px 0 4px; }
.down { transform: rotate(225deg); margin: 4px 0 8px; }
.left { transform: rotate(-45deg); margin: 0 5px 0 8px; }
.right { transform: rotate(135deg); margin: 0 0 0 6px; }
.mini { width: 17px; height: 15px; display: flex; align-items: center; justify-content: center; }
.mini svg { width: 10px; height: 10px; }
.picked { background: #cde4f2; }

.side { flex: 0 0 236px; overflow: hidden; }
.side-in { margin-right: -72px; font-family: "Noto Sans CJK SC", sans-serif; color: #666; }
.side-tools { height: 28px; display: flex; align-items: center; padding-left: 4px; background: #f8f8f8; }
.search { flex: 1; height: 24px; border: 1px solid #999; background: #f0f0f0; padding-left: 4px; margin-left: 1px; }
.search::placeholder { color: #777; opacity: 1; }
.box { border: 1px solid #888; background: #efefef; text-align: center; }
.templates { height: 326px; padding-top: 7px; }
.splitter { width: 102px; height: 1px; margin: 7px auto; background: #999; }
.construct { height: 73px; border: solid #999; border-width: 1px 0 0 1px; padding-top: 3px; margin-bottom: 5px; text-align: center; }
.construct h2 { margin: 0; font-size: 12px; font-weight: 500; line-height: 20px; display: flex; align-items: center; gap: 1px; }
.construct p { margin: 10px 0 0; }
.prop-tools { height: 26px; display: flex; align-items: center; padding-left: 4px; background: #f8f8f8; }
.az { width: 23px; font-size: 12px; gap: 1px; }
.az span { font-size: 8px; line-height: 8px; }
.props { height: 79px; }

.status { flex: 0 0 20px; display: flex; align-items: center; justify-content: flex-end; position: relative; }
.ime { position: absolute; right: 356px; bottom: 1px; display: flex; align-items: flex-end; }
.ime-logo { width: 32px; height: 32px; }
.ime-bar { display: flex; align-items: center; gap: 8px; height: 25px; width: 146px; padding: 0 6px; background: #fff; color: #1b67ad; border: 1px solid #e3e3e3; border-left: 0; }
.ime-bar b { width: 17px; font-size: 14px; text-align: center; white-space: nowrap; }
.sogou-s { font: bold 27px "Liberation Sans", sans-serif; fill: #fff; stroke: #fff; }
.globe { margin: 0 7px 0 0; }
.coords { width: 185px; white-space: nowrap; }

.task { flex: 0 0 40px; display: flex; background: linear-gradient(90deg, #cfe6ee, #d2e6ef 45%, #d5dfee 85%); }
.app { flex: none; width: 49px; display: flex; align-items: center; justify-content: center; position: relative; }
.app:first-child { width: 52px; padding-left: 4px; }
.app svg { width: 24px; height: 24px; stroke: none; }
.run::after { content: ""; position: absolute; left: 5px; right: 4px; bottom: 0; height: 2px; background: #1768b5; }
.app.active { background: #edf4f9; }
.active::after { left: 0; right: 0; }
.tray { margin-left: auto; display: flex; align-items: center; gap: 8px; color: #111; }
.lang { font-size: 15px; color: #555; width: 17px; }
.tray .s { width: 18px; height: 18px; margin-left: 2px; }
.time { width: 22px; margin-left: 17px; display: flex; flex-direction: column; overflow: hidden; white-space: nowrap; font-size: 12px; line-height: 20px; }
.time span:first-child { padding-left: 13px; }
```
